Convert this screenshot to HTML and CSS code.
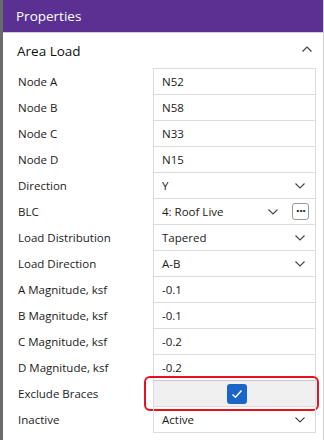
FILE: index.html
```html
<!DOCTYPE html>
<html lang="en">
<head>
  <meta charset="UTF-8" />
  <meta name="viewport" content="width=device-width, initial-scale=1.0" />
  <title>Properties</title>
  <link rel="stylesheet" href="styles.css">
</head>
<body>
  <div class="panel">
    <div class="panel-title">Properties</div>

    <div class="section">
      <div class="section-head">
        <span>Area Load</span>
        <svg class="caret" width="10" height="6" viewBox="0 0 10 6"><path d="M0.5 5.5 L5 1 L9.5 5.5" fill="none" stroke="#444" stroke-width="1.2"/></svg>
      </div>

      <div class="grid">
        <div class="row"><div class="label">Node A</div><div class="cell">N52</div></div>
        <div class="row"><div class="label">Node B</div><div class="cell">N58</div></div>
        <div class="row"><div class="label">Node C</div><div class="cell">N33</div></div>
        <div class="row"><div class="label">Node D</div><div class="cell">N15</div></div>
        <div class="row">
          <div class="label">Direction</div>
          <div class="cell select"><span>Y</span><svg class="chev" width="10" height="6" viewBox="0 0 10 6"><path d="M0.5 0.5 L5 5 L9.5 0.5" fill="none" stroke="#444" stroke-width="1.1"/></svg></div>
        </div>
        <div class="row">
          <div class="label">BLC</div>
          <div class="cell select">
            <span>4: Roof Live</span>
            <svg class="chev short" width="10" height="6" viewBox="0 0 10 6"><path d="M0.5 0.5 L5 5 L9.5 0.5" fill="none" stroke="#444" stroke-width="1.1"/></svg>
            <button class="more">&middot;&middot;&middot;</button>
          </div>
        </div>
        <div class="row">
          <div class="label">Load Distribution</div>
          <div class="cell select"><span>Tapered</span><svg class="chev" width="10" height="6" viewBox="0 0 10 6"><path d="M0.5 0.5 L5 5 L9.5 0.5" fill="none" stroke="#444" stroke-width="1.1"/></svg></div>
        </div>
        <div class="row">
          <div class="label">Load Direction</div>
          <div class="cell select"><span>A-B</span><svg class="chev" width="10" height="6" viewBox="0 0 10 6"><path d="M0.5 0.5 L5 5 L9.5 0.5" fill="none" stroke="#444" stroke-width="1.1"/></svg></div>
        </div>
        <div class="row"><div class="label">A Magnitude, ksf</div><div class="cell">-0.1</div></div>
        <div class="row"><div class="label">B Magnitude, ksf</div><div class="cell">-0.1</div></div>
        <div class="row"><div class="label">C Magnitude, ksf</div><div class="cell">-0.2</div></div>
        <div class="row"><div class="label">D Magnitude, ksf</div><div class="cell">-0.2</div></div>
        <div class="row highlight">
          <div class="label">Exclude Braces</div>
          <div class="cell check-cell">
            <span class="checkbox">
              <svg width="12" height="10" viewBox="0 0 12 10"><path d="M1.5 5.5 L4.5 8.2 L10.5 1.5" fill="none" stroke="#fff" stroke-width="1.5"/></svg>
            </span>
          </div>
          <div class="outline"></div>
        </div>
        <div class="row last">
          <div class="label">Inactive</div>
          <div class="cell select"><span>Active</span><svg class="chev" width="10" height="6" viewBox="0 0 10 6"><path d="M0.5 0.5 L5 5 L9.5 0.5" fill="none" stroke="#444" stroke-width="1.1"/></svg></div>
        </div>
      </div>
    </div>
  </div>
</body>
</html>
```

FILE: styles.css
```css
:root {
  --purple: #5a3192;
  --line: #dcdcdc;
  --text: #1a1a1a;
}

* {
  margin: 0;
  padding: 0;
  box-sizing: border-box;
}

body {
  background: #fff;
  font-family: 'Open Sans', 'Noto Sans', sans-serif;
  color: var(--text);
}

.panel {
  width: 324px;
  height: 440px;
  border-left: 3px solid #6a6a6a;
  border-right: 1px solid #cfcfcf;
  overflow: hidden;
}

.panel-title {
  height: 33px;
  background: var(--purple);
  color: #fff;
  font-size: 13.5px;
  line-height: 32px;
  padding-left: 13px;
  border-bottom: 1px solid #cfcfcf;
}

.section-head {
  height: 35px;
  display: flex;
  align-items: center;
  justify-content: space-between;
  padding-left: 14px;
  padding-right: 11px;
  font-size: 13.5px;
  color: #111;
}

.caret {
  margin-top: -4px;
}

.row {
  display: flex;
  height: 26px;
  position: relative;
  font-size: 11.5px;
}

.label {
  width: 150px;
  padding-left: 15px;
  display: flex;
  align-items: center;
}

.cell {
  width: 163px;
  border: 1px solid var(--line);
  border-bottom: none;
  padding-left: 8px;
  display: flex;
  align-items: center;
}

.row.last .cell {
  border-bottom: 1px solid var(--line);
  height: 27px;
}

.select span {
  flex: 1;
}

.chev {
  margin-right: 10px;
}

.chev.short {
  margin-right: 14px;
}

.more {
  width: 17px;
  height: 17px;
  margin-right: 6px;
  border: 1px solid #9a9a9a;
  border-radius: 3px;
  background: #fff;
  font-size: 11px;
  line-height: 13px;
  font-weight: bold;
  color: #333;
  font-family: 'DejaVu Sans', sans-serif;
  letter-spacing: -1px;
}

.highlight .cell {
  background: #f0f0f0;
  border-top-color: #c9c9c9;
  justify-content: center;
  padding-left: 0;
}

.checkbox {
  width: 20px;
  height: 20px;
  border-radius: 3px;
  background: #1966c8;
  display: flex;
  align-items: center;
  justify-content: center;
  margin-left: 5px;
}

.outline {
  position: absolute;
  left: 141px;
  top: -4px;
  width: 175px;
  height: 35px;
  border: 2px solid #e8101c;
  border-radius: 6px;
}
```
